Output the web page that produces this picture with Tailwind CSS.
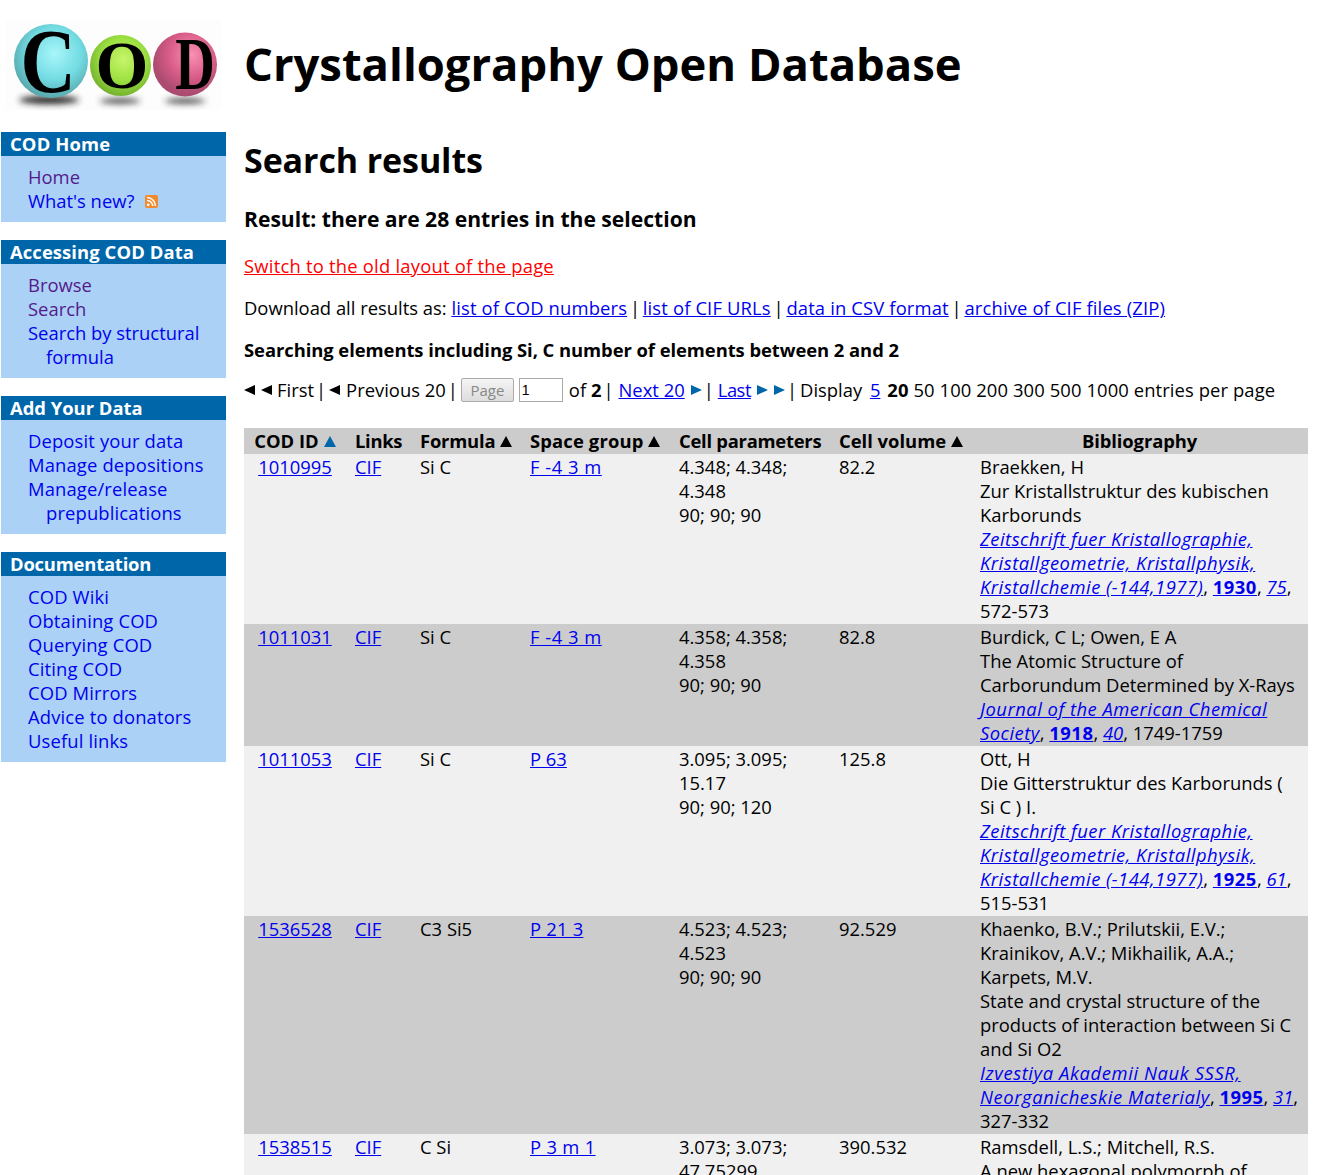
<!DOCTYPE html>
<html lang="en">
<head>
<meta charset="UTF-8">
<title>Crystallography Open Database: Search results</title>
<script src="https://cdn.jsdelivr.net/npm/@tailwindcss/browser@4"></script>
</head>
<body class="h-[1175px] overflow-hidden bg-white text-black font-['Open_Sans',sans-serif] text-[18.4px] leading-[24px]">

<!-- header -->
<div class="flex h-[132px] items-start">
  <div class="w-[244px] shrink-0 pl-[5px] pt-[20px]">
    <svg width="216" height="92" viewBox="0 0 216 92">
      <defs>
        <radialGradient id="ballC" cx="0.55" cy="0.4" r="0.6">
          <stop offset="0" stop-color="#a8f6fa"/><stop offset="0.6" stop-color="#72dbe2"/><stop offset="1" stop-color="#59a9ad"/>
        </radialGradient>
        <radialGradient id="ballO" cx="0.55" cy="0.4" r="0.6">
          <stop offset="0" stop-color="#c8f56a"/><stop offset="0.6" stop-color="#9be040"/><stop offset="1" stop-color="#76b32f"/>
        </radialGradient>
        <radialGradient id="ballD" cx="0.6" cy="0.35" r="0.6">
          <stop offset="0" stop-color="#fb90b4"/><stop offset="0.6" stop-color="#d85c88"/><stop offset="1" stop-color="#ac4b70"/>
        </radialGradient>
        <filter id="blur" x="-50%" y="-300%" width="200%" height="700%"><feGaussianBlur stdDeviation="3"/></filter>
      </defs>
      <rect width="216" height="90" fill="#fdfdfd"/>
      <ellipse cx="44" cy="80" rx="30" ry="4" fill="#222" filter="url(#blur)"/>
      <ellipse cx="115" cy="81" rx="20" ry="2.5" fill="#333" filter="url(#blur)"/>
      <ellipse cx="180" cy="81" rx="20" ry="2.5" fill="#333" filter="url(#blur)"/>
      <circle cx="46" cy="41" r="37" fill="url(#ballC)"/>
      <circle cx="115.5" cy="45.5" r="30.5" fill="url(#ballO)"/>
      <circle cx="180" cy="44.5" r="32" fill="url(#ballD)"/>
      <text transform="translate(43 72) scale(0.85 1)" text-anchor="middle" font-family="'Liberation Serif',serif" font-weight="700" font-size="90">C</text>
      <text x="117" y="68" text-anchor="middle" font-family="'Liberation Serif',serif" font-weight="700" font-size="68">O</text>
      <text transform="translate(190 69) scale(0.73 1)" text-anchor="middle" font-family="'Liberation Serif',serif" font-weight="700" font-size="75">D</text>
    </svg>
  </div>
  <h1 class="pt-[31px] text-[45.4px] font-bold leading-[64px]">Crystallography Open Database</h1>
</div>

<div class="flex">
  <!-- sidebar -->
  <div class="ml-[1px] w-[225px] shrink-0 text-[#0000ee]">
    <div class="bg-[#0066aa] pl-[9px] font-bold leading-[24px] tracking-[0.15px] text-white">COD Home</div>
    <div class="mb-[18px] bg-[#abd1f6] pb-[9px] pl-[27px] pt-[9px]">
      <a class="block text-[#551a8b]" href="#">Home</a>
      <a class="flex items-center" href="#">What's new?
        <svg class="ml-[11px]" width="13" height="13" viewBox="0 0 13 13"><rect width="13" height="13" rx="2" fill="#f08a2c"/><circle cx="3.2" cy="9.8" r="1.4" fill="#fff"/><path d="M2 5.4a5.6 5.6 0 0 1 5.6 5.6M2 2.6a8.4 8.4 0 0 1 8.4 8.4" fill="none" stroke="#fff" stroke-width="1.5"/></svg>
      </a>
    </div>

    <div class="bg-[#0066aa] pl-[9px] font-bold leading-[24px] tracking-[0.1px] text-white">Accessing COD Data</div>
    <div class="mb-[18px] bg-[#abd1f6] pb-[9px] pl-[27px] pt-[9px]">
      <a class="block text-[#551a8b]" href="#">Browse</a>
      <a class="block text-[#551a8b]" href="#">Search</a>
      <a class="block pl-[18px] -indent-[18px]" href="#">Search by structural formula</a>
    </div>

    <div class="bg-[#0066aa] pl-[9px] font-bold leading-[24px] text-white">Add Your Data</div>
    <div class="mb-[18px] bg-[#abd1f6] pb-[9px] pl-[27px] pt-[9px] tracking-[0.15px]">
      <a class="block" href="#">Deposit your data</a>
      <a class="block" href="#">Manage depositions</a>
      <a class="block pl-[18px] -indent-[18px]" href="#">Manage/release prepublications</a>
    </div>

    <div class="bg-[#0066aa] pl-[9px] font-bold leading-[24px] tracking-[-0.2px] text-white">Documentation</div>
    <div class="bg-[#abd1f6] pb-[9px] pl-[27px] pt-[9px] tracking-[0.15px]">
      <a class="block" href="#">COD Wiki</a>
      <a class="block" href="#">Obtaining COD</a>
      <a class="block" href="#">Querying COD</a>
      <a class="block" href="#">Citing COD</a>
      <a class="block" href="#">COD Mirrors</a>
      <a class="block" href="#">Advice to donators</a>
      <a class="block" href="#">Useful links</a>
    </div>
  </div>

  <!-- main -->
  <div class="ml-[18px] w-[1064px] shrink-0">
    <h2 class="pt-[3px] text-[34px] font-bold leading-[50px] tracking-[-0.1px]">Search results</h2>
    <h3 class="mt-[20px] text-[21.1px] font-bold leading-[28px]">Result: there are 28 entries in the selection</h3>
    <p class="mt-[21px]"><a class="tracking-[0.22px] text-[#ff0000] underline" href="#">Switch to the old layout of the page</a></p>
    <p class="mt-[18px]">Download all results as: <a class="tracking-[0.15px] text-[#0000ee] underline" href="#">list of COD numbers</a><span class="mx-[-2px]"> | </span><a class="tracking-[0.15px] text-[#0000ee] underline" href="#">list of CIF URLs</a><span class="mx-[-2px]"> | </span><a class="tracking-[0.15px] text-[#0000ee] underline" href="#">data in CSV format</a><span class="mx-[-2px]"> | </span><a class="tracking-[0.15px] text-[#0000ee] underline" href="#">archive of CIF files (ZIP)</a></p>
    <p class="mt-[18px] font-bold tracking-[-0.05px]">Searching elements including Si, C number of elements between 2 and 2</p>

    <div class="mt-[16px] flex h-[24px] items-center whitespace-pre">
      <svg class="mr-[6px]" width="11" height="10" viewBox="0 0 11 10"><polygon points="0,5 11,0 11,10"/></svg>
      <svg class="mr-[5px]" width="11" height="10" viewBox="0 0 11 10"><polygon points="0,5 11,0 11,10"/></svg>
      <span>First</span>
      <span class="ml-[2px] mr-[3px]">|</span>
      <svg class="mr-[6px]" width="11" height="10" viewBox="0 0 11 10"><polygon points="0,5 11,0 11,10"/></svg>
      <span>Previous 20</span>
      <span class="ml-[2px] mr-[3px]">|</span>
      <button class="h-[24px] w-[53px] rounded-[2px] border border-[#aaa] bg-gradient-to-b from-[#f5f5f5] to-[#dddddd] text-[15px] leading-[20px] text-[#888]">Page</button>
      <input class="ml-[5px] h-[24px] w-[44px] border border-[#aaa] px-[2px] font-['Liberation_Sans',sans-serif] text-[14px]" value="1">
      <span class="ml-[6px]">of <b>2</b></span>
      <span class="ml-[2px] mr-[5px]">|</span>
      <a class="text-[#0000ee] underline" href="#">Next 20</a>
      <svg class="ml-[6px]" width="11" height="10" viewBox="0 0 11 10"><polygon points="11,5 0,0 0,10" fill="#0066aa"/></svg>
      <span class="ml-[2px] mr-[4px]">|</span>
      <a class="tracking-[-0.5px] text-[#0000ee] underline" href="#">Last</a>
      <svg class="ml-[6px]" width="11" height="10" viewBox="0 0 11 10"><polygon points="11,5 0,0 0,10" fill="#0066aa"/></svg>
      <svg class="ml-[6px]" width="11" height="10" viewBox="0 0 11 10"><polygon points="11,5 0,0 0,10" fill="#0066aa"/></svg>
      <span class="ml-[2px] mr-[3px]">|</span>
      <span>Display </span>
      <a class="ml-[3px] text-[#0000ee] underline" href="#">5</a>
      <span class="ml-[2px] tracking-[0.1px]"> <b>20</b> 50 100 200 300 500 1000 entries per page</span>
    </div>

    <table class="mt-[26px] w-[1064px] table-fixed border-collapse">
      <colgroup>
        <col class="w-[106px]"><col class="w-[65px]"><col class="w-[110px]"><col class="w-[149px]"><col class="w-[160px]"><col class="w-[141px]"><col class="w-[333px]">
      </colgroup>
      <thead>
        <tr class="bg-[#cccccc]">
          <th class="pb-[1px] pr-[4px] pt-[1px] text-center font-bold"><span class="inline-flex items-center">COD ID<svg class="ml-[5px]" width="12" height="11" viewBox="0 0 12 11"><polygon points="6,0 12,11 0,11" fill="#0066aa"/></svg></span></th>
          <th class="px-[5px] text-left font-bold tracking-[-0.3px]">Links</th>
          <th class="px-[5px] text-left font-bold tracking-[-0.2px]"><span class="inline-flex items-center">Formula<svg class="ml-[5px]" width="12" height="11" viewBox="0 0 12 11"><polygon points="6,0 12,11 0,11"/></svg></span></th>
          <th class="px-[5px] text-left font-bold tracking-[0.15px]"><span class="inline-flex items-center">Space group<svg class="ml-[5px]" width="12" height="11" viewBox="0 0 12 11"><polygon points="6,0 12,11 0,11"/></svg></span></th>
          <th class="px-[5px] text-left font-bold tracking-[-0.25px]">Cell parameters</th>
          <th class="px-[5px] text-left font-bold"><span class="inline-flex items-center">Cell volume<svg class="ml-[5px]" width="12" height="11" viewBox="0 0 12 11"><polygon points="6,0 12,11 0,11"/></svg></span></th>
          <th class="px-[5px] pr-[9px] text-center font-bold tracking-[-0.1px]">Bibliography</th>
        </tr>
      </thead>
      <tbody class="align-top [&_td]:py-[1px]">
        <tr class="bg-[#f0f0f0]">
          <td class="pr-[4px] text-center"><a class="text-[#0000ee] underline" href="#">1010995</a></td>
          <td class="px-[5px]"><a class="text-[#0000ee] underline" href="#">CIF</a></td>
          <td class="px-[5px]">Si C</td>
          <td class="px-[5px]"><a class="tracking-[0.5px] text-[#0000ee] underline" href="#">F -4 3 m</a></td>
          <td class="px-[5px] pr-[30px]">4.348; 4.348; 4.348<br>90; 90; 90</td>
          <td class="px-[5px]">82.2</td>
          <td class="px-[5px]">Braekken, H<br>Zur Kristallstruktur des kubischen Karborunds<br><a class="italic tracking-[0.5px] text-[#0000ee] underline" href="#">Zeitschrift fuer Kristallographie, Kristallgeometrie, Kristallphysik, Kristallchemie (-144,1977)</a>, <a class="font-bold tracking-[0.5px] text-[#0000ee] underline" href="#">1930</a>, <a class="italic text-[#0000ee] underline" href="#">75</a>, 572-573</td>
        </tr>
        <tr class="bg-[#cccccc]">
          <td class="pr-[4px] text-center"><a class="text-[#0000ee] underline" href="#">1011031</a></td>
          <td class="px-[5px]"><a class="text-[#0000ee] underline" href="#">CIF</a></td>
          <td class="px-[5px]">Si C</td>
          <td class="px-[5px]"><a class="tracking-[0.5px] text-[#0000ee] underline" href="#">F -4 3 m</a></td>
          <td class="px-[5px] pr-[30px]">4.358; 4.358; 4.358<br>90; 90; 90</td>
          <td class="px-[5px]">82.8</td>
          <td class="px-[5px]">Burdick, C L; Owen, E A<br>The Atomic Structure of Carborundum Determined by X-Rays<br><a class="italic tracking-[0.5px] text-[#0000ee] underline" href="#">Journal of the American Chemical Society</a>, <a class="font-bold tracking-[0.5px] text-[#0000ee] underline" href="#">1918</a>, <a class="italic text-[#0000ee] underline" href="#">40</a>, 1749-1759</td>
        </tr>
        <tr class="bg-[#f0f0f0]">
          <td class="pr-[4px] text-center"><a class="text-[#0000ee] underline" href="#">1011053</a></td>
          <td class="px-[5px]"><a class="text-[#0000ee] underline" href="#">CIF</a></td>
          <td class="px-[5px]">Si C</td>
          <td class="px-[5px]"><a class="text-[#0000ee] underline" href="#">P 63</a></td>
          <td class="px-[5px] pr-[30px]">3.095; 3.095; 15.17<br>90; 90; 120</td>
          <td class="px-[5px]">125.8</td>
          <td class="px-[5px]">Ott, H<br>Die Gitterstruktur des Karborunds ( Si&nbsp;C ) I.<br><a class="italic tracking-[0.5px] text-[#0000ee] underline" href="#">Zeitschrift fuer Kristallographie, Kristallgeometrie, Kristallphysik, Kristallchemie (-144,1977)</a>, <a class="font-bold tracking-[0.5px] text-[#0000ee] underline" href="#">1925</a>, <a class="italic text-[#0000ee] underline" href="#">61</a>, 515-531</td>
        </tr>
        <tr class="bg-[#cccccc]">
          <td class="pr-[4px] text-center"><a class="text-[#0000ee] underline" href="#">1536528</a></td>
          <td class="px-[5px]"><a class="text-[#0000ee] underline" href="#">CIF</a></td>
          <td class="px-[5px]">C3 Si5</td>
          <td class="px-[5px]"><a class="tracking-[0.2px] text-[#0000ee] underline" href="#">P 21 3</a></td>
          <td class="px-[5px] pr-[30px]">4.523; 4.523; 4.523<br>90; 90; 90</td>
          <td class="px-[5px]">92.529</td>
          <td class="px-[5px]">Khaenko, B.V.; Prilutskii, E.V.; Krainikov, A.V.; Mikhailik, A.A.; Karpets, M.V.<br>State and crystal structure of the products of interaction between Si C and Si O2<br><a class="italic tracking-[0.6px] text-[#0000ee] underline" href="#">Izvestiya Akademii Nauk SSSR, Neorganicheskie Materialy</a>, <a class="font-bold tracking-[0.5px] text-[#0000ee] underline" href="#">1995</a>, <a class="italic text-[#0000ee] underline" href="#">31</a>, 327-332</td>
        </tr>
        <tr class="bg-[#f0f0f0]">
          <td class="pr-[4px] text-center"><a class="text-[#0000ee] underline" href="#">1538515</a></td>
          <td class="px-[5px]"><a class="text-[#0000ee] underline" href="#">CIF</a></td>
          <td class="px-[5px]">C Si</td>
          <td class="px-[5px]"><a class="tracking-[0.3px] text-[#0000ee] underline" href="#">P 3 m 1</a></td>
          <td class="px-[5px] pr-[30px]">3.073; 3.073; 47.75299<br>90; 90; 120</td>
          <td class="px-[5px]">390.532</td>
          <td class="px-[5px]">Ramsdell, L.S.; Mitchell, R.S.<br>A new hexagonal polymorph of silicon carbide, 19H</td>
        </tr>
      </tbody>
    </table>
  </div>
</div>
</body>
</html>
